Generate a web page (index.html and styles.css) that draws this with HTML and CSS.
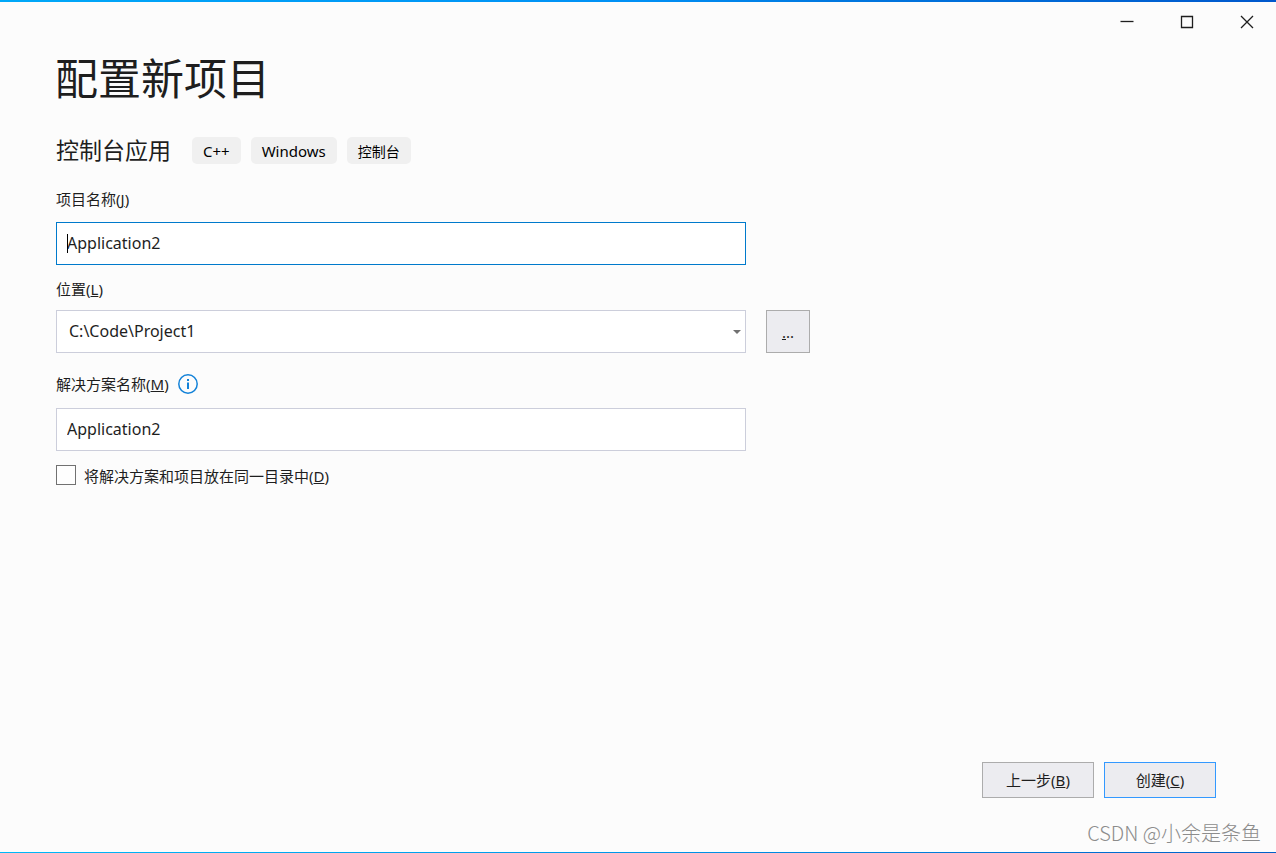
FILE: index.html
```html
<!DOCTYPE html>
<html lang="zh-CN">
<head>
<meta charset="utf-8">
<meta name="viewport" content="width=device-width, initial-scale=1">
<title>配置新项目</title>
<link rel="stylesheet" href="styles.css">
</head>
<body>
<div class="window">
  <header class="titlebar">
    <button class="caption" type="button" aria-label="最小化"><svg viewBox="0 0 14 14"><path d="M0.5 6.5H13.5"/></svg></button>
    <button class="caption" type="button" aria-label="最大化"><svg viewBox="0 0 14 14"><path d="M1.5 1.5H12.5V12.5H1.5Z"/></svg></button>
    <button class="caption" type="button" aria-label="关闭"><svg viewBox="0 0 14 14"><path d="M1 1L13 13M13 1L1 13"/></svg></button>
  </header>
  <main class="content">
    <h1 class="title">配置新项目</h1>
    <div class="template">
      <h2 class="template-name">控制台应用</h2>
      <ul class="tags">
        <li class="tag">C++</li>
        <li class="tag">Windows</li>
        <li class="tag tag-cjk">控制台</li>
      </ul>
    </div>
    <form class="form" id="project">
      <div class="field">
        <label class="label" for="name">项目名称(<u>J</u>)</label>
        <div class="input-wrap">
          <input class="box input-active" id="name" type="text" value="Application2">
          <span class="caret"></span>
        </div>
      </div>
      <div class="field field-location">
        <label class="label" for="location">位置(<u>L</u>)</label>
        <div class="location">
          <div class="select-wrap">
            <select class="box select" id="location"><option>C:\Code\Project1</option></select>
            <svg class="arrow" viewBox="0 0 8 4"><path d="M0 0H8L4 4Z"/></svg>
          </div>
          <button class="browse" type="button" aria-label="浏览"><u>.</u>..</button>
        </div>
      </div>
      <div class="field field-solution">
        <div class="label-row">
          <label class="label" for="solution">解决方案名称(<u>M</u>)</label>
          <svg class="info" viewBox="0 0 20 20"><circle cx="10" cy="10" r="9.2"/><path d="M9 8.5H11V15H9ZM9 5H11V7H9Z"/></svg>
        </div>
        <input class="box" id="solution" type="text" value="Application2">
      </div>
      <div class="check-row">
        <input class="check" id="same" type="checkbox">
        <label class="label" for="same">将解决方案和项目放在同一目录中(<u>D</u>)</label>
      </div>
    </form>
  </main>
  <footer class="actions">
    <button class="button" type="button">上一步(<u>B</u>)</button>
    <button class="button button-primary" type="submit" form="project">创建(<u>C</u>)</button>
  </footer>
  <span class="watermark">CSDN @小余是条鱼</span>
</div>
</body>
</html>
```
FILE: styles.css
```css
* {
  box-sizing: border-box;
}

body {
  margin: 0;
  background: #fcfcfc;
  color: #1e1e1e;
  font: 15px/20px "Noto Sans", "Noto Sans CJK SC", sans-serif;
}

button,
input,
select {
  color: inherit;
  font: inherit;
}

.window {
  position: relative;
  display: flex;
  flex-direction: column;
  min-height: 100vh;
}

.window::before,
.window::after {
  content: "";
  height: 2px;
  background: linear-gradient(90deg, #00a8f8, #0090f5 50%, #0078e0 65%, #0058cc);
}

.window::after {
  height: 1px;
  background: linear-gradient(90deg, #00b8f8, #0096e8 50%, #0060c8);
}

.titlebar {
  display: flex;
  justify-content: flex-end;
}

.caption {
  display: grid;
  place-items: center;
  width: 60px;
  height: 40px;
  padding: 0;
  border: 0;
  background: none;
}

.caption:last-child {
  width: 59px;
}

.caption svg {
  width: 14px;
  height: 14px;
  fill: none;
  stroke: #1e1e1e;
  stroke-width: 1.3;
}

.content {
  flex: 1;
  padding: 7px 55px 0 56px;
}

.title {
  margin: 0 0 0 -1px;
  font-size: 43px;
  font-weight: 400;
  line-height: 60px;
}

.template {
  display: flex;
  align-items: center;
  gap: 19px;
  margin-top: 25px;
}

.template-name {
  margin: 0;
  font-size: 23px;
  font-weight: 400;
  line-height: 32px;
}

.tags {
  display: flex;
  gap: 10px;
  margin: 0;
  padding: 0 0 0 2px;
  list-style: none;
}

.tag {
  padding: 4px 11px 2px;
  border-radius: 5px;
  background: #f0f0f0;
  color: #000;
  line-height: 21px;
}

.tag-cjk {
  font-size: 14px;
}

.form {
  max-width: 754px;
  margin-top: 23px;
}

.field,
.input-wrap,
.select-wrap {
  display: flex;
  flex-direction: column;
}

.field {
  gap: 13px;
}

.field > .box,
.input-wrap {
  margin-right: 64px;
}

.input-wrap,
.select-wrap {
  position: relative;
}

.box {
  height: 43px;
  padding: 0 10px 1px;
  border: 1px solid #cccedb;
  border-radius: 0;
  background: #fff;
  font-size: 16px;
  outline: none;
}

.input-active {
  border-color: #007acc;
}

.caret {
  position: absolute;
  top: 12px;
  left: 11px;
  width: 1px;
  height: 19px;
  background: #000;
}

.field-location {
  gap: 11px;
  margin-top: 14px;
}

.location {
  display: flex;
  gap: 20px;
}

.select-wrap {
  flex: 1;
}

.select {
  padding: 0 12px 1px;
  appearance: none;
}

.arrow {
  position: absolute;
  top: 20px;
  right: 5px;
  width: 8px;
  height: 4px;
  fill: #717171;
  pointer-events: none;
}

.browse {
  width: 44px;
  padding: 0;
  border: 1px solid #acacac;
  background: #ececf0;
}

.field-solution {
  margin-top: 19px;
}

.label-row {
  display: flex;
  align-items: center;
  gap: 9px;
  height: 23px;
}

.info {
  width: 20px;
  height: 20px;
  fill: #1382d8;
}

.info circle {
  fill: none;
  stroke: #1382d8;
  stroke-width: 1.5;
}

.check-row {
  display: flex;
  align-items: flex-start;
  gap: 8px;
  margin-top: 14px;
}

.check-row .label {
  padding-top: 1px;
}

.check {
  width: 20px;
  height: 20px;
  margin: 0;
  border: 1px solid #717171;
  background: #fefefe;
  appearance: none;
}

.check:checked {
  background: #007acc;
}

.actions {
  display: flex;
  justify-content: flex-end;
  gap: 10px;
  padding: 0 60px 54px;
}

.button {
  width: 112px;
  height: 36px;
  padding: 0;
  border: 1px solid #acacac;
  background: #ececf0;
}

.button-primary {
  border-color: #3399ff;
}

.watermark {
  position: absolute;
  right: 15px;
  bottom: 6px;
  color: #8c8c8c;
  font-family: "Noto Sans CJK SC", sans-serif;
  font-size: 20px;
  font-weight: 300;
  line-height: 28px;
}
```
